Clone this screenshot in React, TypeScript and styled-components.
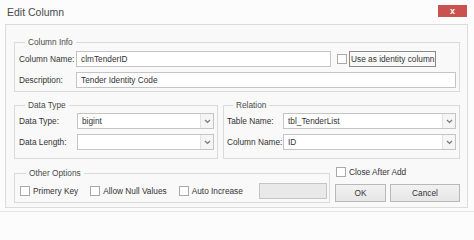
import styled, { createGlobalStyle } from 'styled-components';

const GlobalStyle = createGlobalStyle`
  html, body {
    margin: 0;
    padding: 0;
    background: #fcfcfc;
  }
  * {
    box-sizing: border-box;
  }
`;

const Window = styled.div`
  width: 474px;
  height: 217px;
  background: #fcfcfc;
  font-family: 'Liberation Sans', Arial, sans-serif;
  font-size: 8.3px;
  color: #333;
  overflow: hidden;
`;

const TitleBar = styled.div`
  height: 24px;
  display: flex;
  align-items: flex-start;
  justify-content: space-between;
  padding: 0 7px 0 7px;
`;

const Title = styled.div`
  font-size: 10.5px;
  color: #4a4a4a;
  line-height: 13px;
  margin-top: 6px;
`;

const CloseButton = styled.div`
  width: 29px;
  height: 12px;
  margin-top: 5px;
  background: #c9514f;
  color: #fff;
  display: flex;
  align-items: center;
  justify-content: center;
  font-size: 9px;
  font-weight: bold;
  line-height: 1;
`;

const Panel = styled.div`
  margin-left: 5px;
  width: 463px;
  height: 184px;
  border: 1px solid #dcdcdc;
  background: #f9f9f9;
  padding: 12px 7px 0 8px;
  display: flex;
  flex-direction: column;
`;

const FrameEdge = styled.div`
  margin-top: 3px;
  height: 1px;
  background: #dae7f2;
`;

const Group = styled.fieldset<{ $pl?: number; $pr?: number; $pt?: number; $pb?: number }>`
  margin: 0;
  min-width: 0;
  border: 1px solid #dadada;
  padding: ${(p) => p.$pt ?? 4}px ${(p) => p.$pr ?? 3}px ${(p) => p.$pb ?? 3}px ${(p) => p.$pl ?? 4}px;
  display: flex;
  flex-direction: column;
  gap: 5px;
`;

const Legend = styled.legend`
  margin-left: 6px;
  padding: 0 3px;
  line-height: 10px;
  color: #4a4a4a;
`;

const Row = styled.div`
  display: flex;
  align-items: center;
  height: 16px;
`;

const Label = styled.span<{ $w: number }>`
  width: ${(p) => p.$w}px;
  flex: none;
  white-space: nowrap;
`;

const TextBox = styled.div<{ $w?: number }>`
  height: 16px;
  ${(p) => (p.$w ? `width: ${p.$w}px; flex: none;` : 'flex: 1;')}
  border: 1px solid #c4c4c4;
  background: #fff;
  padding-left: 4px;
  display: flex;
  align-items: center;
  white-space: nowrap;
`;

const Combo = styled.div`
  height: 16px;
  flex: 1;
  border: 1px solid #c4c4c4;
  background: #fff;
  display: flex;
  align-items: stretch;
`;

const ComboText = styled.span`
  flex: 1;
  padding-left: 4px;
  display: flex;
  align-items: center;
`;

const ComboButton = styled.span`
  width: 13px;
  border-left: 1px solid #e2e2e2;
  background: #f5f5f5;
  display: flex;
  align-items: center;
  justify-content: center;
`;

const Box = styled.span`
  width: 10px;
  height: 10px;
  flex: none;
  border: 1px solid #a9a9a9;
  background: #fff;
`;

const Check = styled.label<{ $gap?: number; $ml?: number }>`
  display: flex;
  align-items: center;
  gap: ${(p) => p.$gap ?? 3}px;
  margin-left: ${(p) => p.$ml ?? 0}px;
  white-space: nowrap;
`;

const FocusText = styled.span`
  height: 16px;
  border: 1px solid #8a8a8a;
  padding: 0 1px;
  display: flex;
  align-items: center;
`;

const MidRow = styled.div`
  display: grid;
  grid-template-columns: 204px 1fr;
  column-gap: 5px;
  margin-top: 8px;
`;

const BottomRow = styled.div`
  display: flex;
  align-items: flex-start;
  gap: 5px;
  margin-top: 7px;
`;

const OptionsGroup = styled(Group)`
  width: 316px;
  flex: none;
  margin-top: 2px;
`;

const OptionLine = styled.div`
  display: flex;
  align-items: center;
  gap: 12px;
  height: 16px;
`;

const DisabledBox = styled.div`
  width: 68px;
  height: 16px;
  margin-left: auto;
  border: 1px solid #c4c4c4;
  background: #e9e9e9;
`;

const Actions = styled.div`
  flex: 1;
  display: flex;
  flex-direction: column;
`;

const CloseAfter = styled.div`
  height: 12px;
  padding-left: 1px;
  display: flex;
  align-items: center;
`;

const Buttons = styled.div`
  display: flex;
  gap: 4px;
  margin-top: 6px;
`;

const Button = styled.div<{ $w: number }>`
  width: ${(p) => p.$w}px;
  height: 18px;
  border: 1px solid #b8b8b8;
  background: linear-gradient(#f2f2f2, #e6e6e6);
  display: flex;
  align-items: center;
  justify-content: center;
  color: #333;
`;

const Chevron = () => (
  <svg width="7" height="5" viewBox="0 0 7 5">
    <path d="M1 1 L3.5 3.5 L6 1" fill="none" stroke="#777" strokeWidth="1.2" />
  </svg>
);

const ComboBox = ({ value }: { value: string }) => (
  <Combo>
    <ComboText>{value}</ComboText>
    <ComboButton>
      <Chevron />
    </ComboButton>
  </Combo>
);

const App = () => (
  <Window>
    <GlobalStyle />
    <TitleBar>
      <Title>Edit Column</Title>
      <CloseButton>x</CloseButton>
    </TitleBar>
    <Panel>
      <Group>
        <Legend>Column Info</Legend>
        <Row>
          <Label $w={57}>Column Name:</Label>
          <TextBox $w={255}>clmTenderID</TextBox>
          <Check $ml={6} $gap={2}>
            <Box />
            <FocusText>Use as identity column</FocusText>
          </Check>
        </Row>
        <Row>
          <Label $w={57}>Description:</Label>
          <TextBox>Tender Identity Code</TextBox>
        </Row>
      </Group>
      <MidRow>
        <Group $pt={3} $pb={8}>
          <Legend>Data Type</Legend>
          <Row>
            <Label $w={58}>Data Type:</Label>
            <ComboBox value="bigint" />
          </Row>
          <Row>
            <Label $w={58}>Data Length:</Label>
            <ComboBox value="" />
          </Row>
        </Group>
        <Group $pt={3} $pb={8} $pl={3}>
          <Legend>Relation</Legend>
          <Row>
            <Label $w={56}>Table Name:</Label>
            <ComboBox value="tbl_TenderList" />
          </Row>
          <Row>
            <Label $w={56}>Column Name:</Label>
            <ComboBox value="ID" />
          </Row>
        </Group>
      </MidRow>
      <BottomRow>
        <OptionsGroup $pt={5} $pb={3} $pl={5} $pr={2}>
          <Legend>Other Options</Legend>
          <OptionLine>
            <Check>
              <Box />
              Primery Key
            </Check>
            <Check>
              <Box />
              Allow Null Values
            </Check>
            <Check>
              <Box />
              Auto Increase
            </Check>
            <DisabledBox />
          </OptionLine>
        </OptionsGroup>
        <Actions>
          <CloseAfter>
            <Check>
              <Box />
              Close After Add
            </Check>
          </CloseAfter>
          <Buttons>
            <Button $w={51}>OK</Button>
            <Button $w={70}>Cancel</Button>
          </Buttons>
        </Actions>
      </BottomRow>
    </Panel>
    <FrameEdge />
  </Window>
);

export default App;
